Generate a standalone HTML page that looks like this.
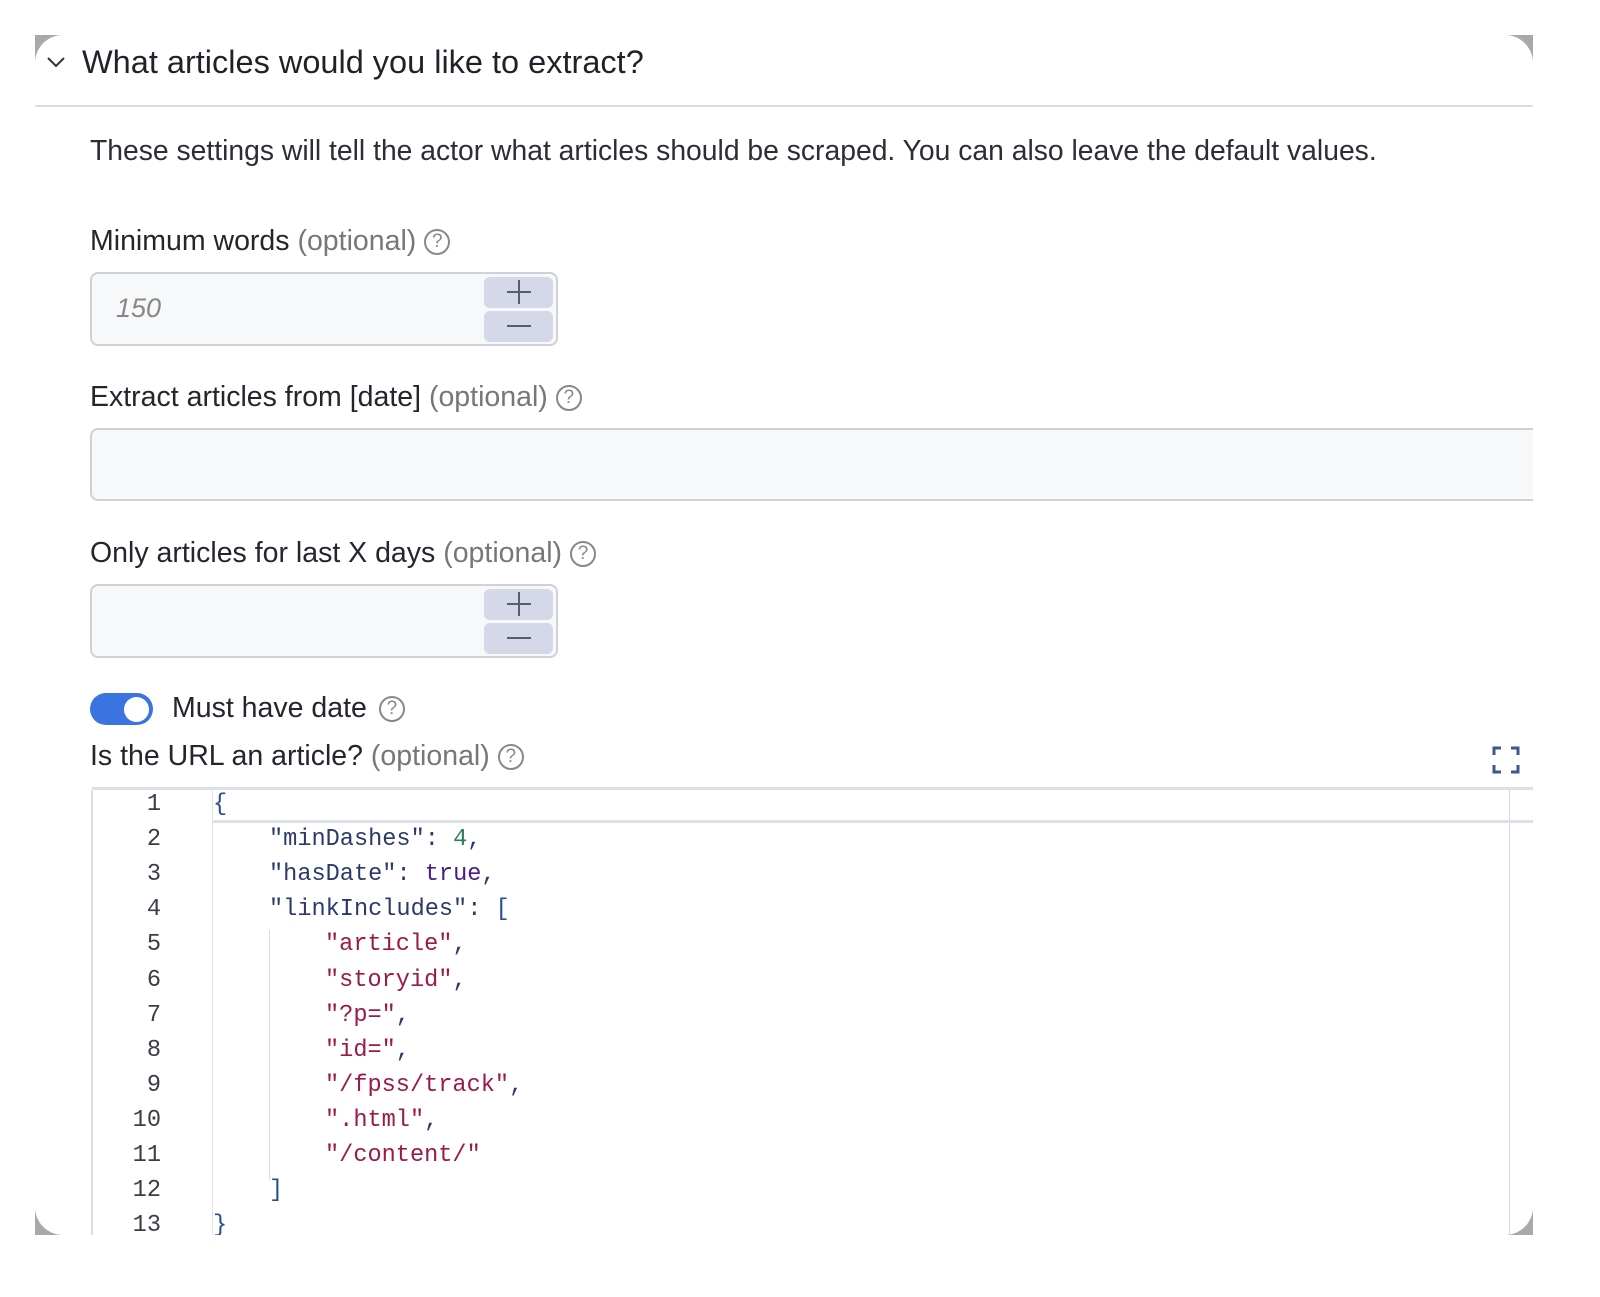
<!DOCTYPE html>
<html><head><meta charset="utf-8"><style>
*{margin:0;padding:0;box-sizing:border-box}
body{width:1600px;height:1297px;background:#fff;position:relative;overflow:hidden;font-family:"Liberation Sans",Arial,sans-serif;color:#23262d}
.frame{position:absolute;left:35px;top:35px;width:1498px;height:1200px;background:#a9a9a9}
.inner{position:absolute;inset:0;background:#fff;border-radius:28px;overflow:hidden}
.a{position:absolute;white-space:nowrap}
.lbl{font-size:28.5px;color:#23262d}
.opt{color:#777}
.help{display:inline-block;width:26px;height:26px;border:2px solid #888;border-radius:50%;font-size:19px;line-height:22px;text-align:center;color:#888;vertical-align:3px;margin-left:8px;font-weight:normal}
.inp{position:absolute;background:#f7f8fa;border:2px solid #cfd1d6;border-radius:8px}
.btn{position:absolute;width:69px;height:31px;background:#d5d8e8;border-radius:6px}
.btn .h{position:absolute;left:23px;top:14px;width:24px;height:2px;background:#585c6c}
.btn .v{position:absolute;left:34px;top:3px;width:2px;height:24px;background:#585c6c}
.code{font-family:"Liberation Mono","DejaVu Sans Mono",monospace;font-size:23.6px}
.ln{position:absolute;width:70px;text-align:right;color:#3a3d46;font-family:"Liberation Mono",monospace;font-size:23.6px}
.k{color:#2b3a6b}.s{color:#9a1a4a}.n{color:#2e7d5b}.b{color:#4a1c8a}.p{color:#2a4d8f}
</style></head><body>
<div class="frame"><div class="inner"></div></div>

<svg class="a" style="left:45px;top:54px" width="22" height="16" viewBox="0 0 22 16"><path d="M3 4 L11 12 L19 4" fill="none" stroke="#333" stroke-width="2"/></svg>
<div class="a" style="left:82px;top:44px;font-size:32.5px;color:#1f2229">What articles would you like to extract?</div>
<div class="a" style="left:35px;top:105px;width:1498px;height:2px;background:#dcdcdc"></div>

<div class="a" style="left:90px;top:134px;font-size:28.3px;color:#2b2e35">These settings will tell the actor what articles should be scraped. You can also leave the default values.</div>

<div class="a lbl" style="left:90px;top:225px">Minimum words <span class="opt">(optional)</span><span class="help">?</span></div>
<div class="inp" style="left:90px;top:272px;width:468px;height:74px"></div>
<div class="a" style="left:116px;top:293px;font-size:27px;color:#888;font-style:italic">150</div>
<div class="btn" style="left:484px;top:277px"><div class="h"></div><div class="v"></div></div>
<div class="btn" style="left:484px;top:311px"><div class="h"></div></div>

<div class="a lbl" style="left:90px;top:381px">Extract articles from [date] <span class="opt">(optional)</span><span class="help">?</span></div>
<div class="inp" style="left:90px;top:428px;width:1460px;height:73px"></div>

<div class="a lbl" style="left:90px;top:537px">Only articles for last X days <span class="opt">(optional)</span><span class="help">?</span></div>
<div class="inp" style="left:90px;top:584px;width:468px;height:74px"></div>
<div class="btn" style="left:484px;top:589px"><div class="h"></div><div class="v"></div></div>
<div class="btn" style="left:484px;top:623px"><div class="h"></div></div>

<div class="a" style="left:90px;top:693px;width:63px;height:32px;border-radius:16px;background:#3b74e0"></div>
<div class="a" style="left:124px;top:697px;width:25px;height:25px;border-radius:50%;background:#fff"></div>
<div class="a lbl" style="left:172px;top:692px">Must have date<span class="help" style="margin-left:12px">?</span></div>

<div class="a lbl" style="left:90px;top:740px">Is the URL an article? <span class="opt">(optional)</span><span class="help">?</span></div>
<svg class="a" style="left:1492px;top:746px" width="28" height="28" viewBox="0 0 28 28"><path d="M2 9V2H9M19 2H26V9M26 19V26H19M9 26H2V19" fill="none" stroke="#3b5a94" stroke-width="3"/></svg>

<div class="a" style="left:92px;top:787px;width:1441px;height:3px;background:#dde0ea"></div>
<div class="a" style="left:91px;top:790px;width:2px;height:445px;background:#ddd"></div>
<div class="a" style="left:212px;top:790px;width:1px;height:445px;background:#e4e4e8"></div>
<div class="a" style="left:1509px;top:790px;width:1px;height:445px;background:#d8d8de"></div>
<div class="a" style="left:213px;top:820px;width:1320px;height:3px;background:#dde0ea"></div>
<div class="a" style="left:269px;top:930px;width:1px;height:250px;background:#ddd"></div>

<div class="ln" style="left:91px;top:791px">1</div>
<div class="ln" style="left:91px;top:826px">2</div>
<div class="ln" style="left:91px;top:861px">3</div>
<div class="ln" style="left:91px;top:896px">4</div>
<div class="ln" style="left:91px;top:931px">5</div>
<div class="ln" style="left:91px;top:967px">6</div>
<div class="ln" style="left:91px;top:1002px">7</div>
<div class="ln" style="left:91px;top:1037px">8</div>
<div class="ln" style="left:91px;top:1072px">9</div>
<div class="ln" style="left:91px;top:1107px">10</div>
<div class="ln" style="left:91px;top:1142px">11</div>
<div class="ln" style="left:91px;top:1177px">12</div>
<div class="ln" style="left:91px;top:1212px">13</div>

<div class="a code p" style="left:213px;top:791px">{</div>
<div class="a code" style="left:269px;top:826px"><span class="k">"minDashes"</span><span class="k">: </span><span class="n">4</span><span class="k">,</span></div>
<div class="a code" style="left:269px;top:861px"><span class="k">"hasDate"</span><span class="k">: </span><span class="b">true</span><span class="k">,</span></div>
<div class="a code" style="left:269px;top:896px"><span class="k">"linkIncludes": </span><span class="p">[</span></div>
<div class="a code" style="left:325px;top:931px"><span class="s">"article"</span><span class="k">,</span></div>
<div class="a code" style="left:325px;top:967px"><span class="s">"storyid"</span><span class="k">,</span></div>
<div class="a code" style="left:325px;top:1002px"><span class="s">"?p="</span><span class="k">,</span></div>
<div class="a code" style="left:325px;top:1037px"><span class="s">"id="</span><span class="k">,</span></div>
<div class="a code" style="left:325px;top:1072px"><span class="s">"/fpss/track"</span><span class="k">,</span></div>
<div class="a code" style="left:325px;top:1107px"><span class="s">".html"</span><span class="k">,</span></div>
<div class="a code" style="left:325px;top:1142px"><span class="s">"/content/"</span></div>
<div class="a code p" style="left:269px;top:1177px">]</div>
<div class="a code p" style="left:213px;top:1212px">}</div>

<div class="a" style="left:0;top:1235px;width:1600px;height:62px;background:#fff"></div>
<div class="a" style="left:1533px;top:0;width:67px;height:1297px;background:#fff"></div>
<svg class="a" style="left:35px;top:1208px" width="28" height="28"><path d="M0 0V27H27A27 27 0 0 1 0 0Z" fill="#a9a9a9"/></svg>
<svg class="a" style="left:1505px;top:1208px" width="28" height="28"><path d="M28 0V27H1A27 27 0 0 0 28 0Z" fill="#a9a9a9"/></svg>
</body></html>
